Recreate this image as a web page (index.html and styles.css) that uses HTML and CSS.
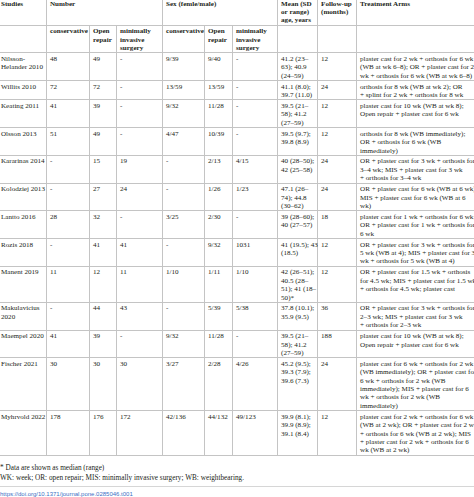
FILE: index.html
```html
<!DOCTYPE html>
<html lang="en">
<head>
<meta charset="utf-8">
<title>Table 1</title>
<link rel="stylesheet" href="styles.css">
</head>
<body>
<div class="page">
<table class="data">
<colgroup>
<col class="c1"><col class="c2"><col class="c3"><col class="c4"><col class="c5"><col class="c6"><col class="c7"><col class="c8"><col class="c9"><col class="c10">
</colgroup>
<thead>
<tr>
<th>Studies</th>
<th colspan="3">Number</th>
<th colspan="3">Sex (femle/male)</th>
<th>Mean (SD<br>or range)<br>age, years</th>
<th>Follow-up<br>(months)</th>
<th>Treatment Arms</th>
</tr>
<tr>
<th></th>
<th>conservative</th>
<th>Open<br>repair</th>
<th>minimally<br>invasive<br>surgery</th>
<th>conservative</th>
<th>Open<br>repair</th>
<th>minimally<br>invasive<br>surgery</th>
<th></th>
<th></th>
<th></th>
</tr>
</thead>
<tbody>
<tr>
<td>Nilsson-<br>Helander 2010</td><td>48</td><td>49</td><td>-</td><td>9/39</td><td>9/40</td><td>-</td>
<td>41.2 (23–<br>63); 40.9<br>(24–59)</td><td>12</td>
<td>plaster cast for 2 wk + orthosis for 6 wk<br>(WB at wk 6–8); OR + plaster cast for 2<br>wk + orthosis for 6 wk (WB at wk 6–8)</td>
</tr>
<tr>
<td>Willits 2010</td><td>72</td><td>72</td><td>-</td><td>13/59</td><td>13/59</td><td>-</td>
<td>41.1 (8.0);<br>39.7 (11.0)</td><td>24</td>
<td>orthosis for 8 wk (WB at wk 2); OR<br>+ splint for 2 wk + orthosis for 8 wk</td>
</tr>
<tr>
<td>Keating 2011</td><td>41</td><td>39</td><td>-</td><td>9/32</td><td>11/28</td><td>-</td>
<td>39.5 (21–<br>58); 41.2<br>(27–59)</td><td>12</td>
<td>plaster cast for 10 wk (WB at wk 8);<br>Open repair + plaster cast for 6 wk</td>
</tr>
<tr>
<td>Olsson 2013</td><td>51</td><td>49</td><td>-</td><td>4/47</td><td>10/39</td><td>-</td>
<td>39.5 (9.7);<br>39.8 (8.9)</td><td>12</td>
<td>orthosis for 8 wk (WB immediately);<br>OR + orthosis for 6 wk (WB<br>immediately)</td>
</tr>
<tr>
<td>Kararinas 2014</td><td>-</td><td>15</td><td>19</td><td>-</td><td>2/13</td><td>4/15</td>
<td>40 (28–50);<br>42 (25–58)</td><td>24</td>
<td>OR + plaster cast for 3 wk + orthosis for<br>3–4 wk; MIS + plaster cast for 3 wk<br>+ orthosis for 3–4 wk</td>
</tr>
<tr>
<td>Kolodziej 2013</td><td>-</td><td>27</td><td>24</td><td>-</td><td>1/26</td><td>1/23</td>
<td>47.1 (26–<br>74); 44.8<br>(30–62)</td><td>24</td>
<td>OR + plaster cast for 6 wk (WB at 6 wk);<br>MIS + plaster cast for 6 wk (WB at 6<br>wk)</td>
</tr>
<tr>
<td>Lantto 2016</td><td>28</td><td>32</td><td>-</td><td>3/25</td><td>2/30</td><td>-</td>
<td>39 (28–60);<br>40 (27–57)</td><td>18</td>
<td>plaster cast for 1 wk + orthosis for 6 wk;<br>OR + plaster cast for 1 wk + orthosis for<br>6 wk</td>
</tr>
<tr>
<td>Rozis 2018</td><td>-</td><td>41</td><td>41</td><td>-</td><td>9/32</td><td>1031</td>
<td>41 (19.5); 43<br>(18.5)</td><td>12</td>
<td>OR + plaster cast for 3 wk + orthosis for<br>5 wk (WB at 4); MIS + plaster cast for 3<br>wk + orthosis for 5 wk (WB at 4)</td>
</tr>
<tr>
<td>Manent 2019</td><td>11</td><td>12</td><td>11</td><td>1/10</td><td>1/11</td><td>1/10</td>
<td>42 (26–51);<br>40.5 (28–<br>51); 41 (18–<br>50)*</td><td>12</td>
<td>OR + plaster cast for 1.5 wk + orthosis<br>for 4.5 wk; MIS + plaster cast for 1.5 wk<br>+ orthosis for 4.5 wk; plaster cast</td>
</tr>
<tr>
<td>Makulavicius<br>2020</td><td>-</td><td>44</td><td>43</td><td>-</td><td>5/39</td><td>5/38</td>
<td>37.8 (10.1);<br>35.9 (9.5)</td><td>36</td>
<td>OR + plaster cast for 3 wk + orthosis for<br>2–3 wk; MIS + plaster cast for 3 wk<br>+ orthosis for 2–3 wk</td>
</tr>
<tr>
<td>Maempel 2020</td><td>41</td><td>39</td><td>-</td><td>9/32</td><td>11/28</td><td>-</td>
<td>39.5 (21–<br>58); 41.2<br>(27–59)</td><td>188</td>
<td>plaster cast for 10 wk (WB at wk 8);<br>Open repair + plaster cast for 6 wk</td>
</tr>
<tr>
<td>Fischer 2021</td><td>30</td><td>30</td><td>30</td><td>3/27</td><td>2/28</td><td>4/26</td>
<td>45.2 (9.5);<br>39.3 (7.9);<br>39.6 (7.3)</td><td>24</td>
<td>plaster cast for 6 wk + orthosis for 2 wk<br>(WB immediately); OR + plaster cast for<br>6 wk + orthosis for 2 wk (WB<br>immediately); MIS + plaster cast for 6<br>wk + orthosis for 2 wk (WB<br>immediately)</td>
</tr>
<tr>
<td>Myhrvold 2022</td><td>178</td><td>176</td><td>172</td><td>42/136</td><td>44/132</td><td>49/123</td>
<td>39.9 (8.1);<br>39.9 (8.9);<br>39.1 (8.4)</td><td>12</td>
<td>plaster cast for 2 wk + orthosis for 6 wk<br>(WB at 2 wk); OR + plaster cast for 2 wk<br>+ orthosis for 6 wk (WB at 2 wk); MIS<br>+ plaster cast for 2 wk + orthosis for 6<br>wk (WB at 2 wk)</td>
</tr>
</tbody>
</table>
<div class="notes">
<p class="note">* Data are shown as median (range)</p>
<p class="note">WK: week; OR: open repair; MIS: minimally invasive surgery; WB: weightbearing.</p>
</div>
<div class="linkbar">
<a class="doi" href="#">https://doi.org/10.1371/journal.pone.0285046.t001</a>
</div>
</div>
</body>
</html>
```
FILE: styles.css
```css
html, body {
  margin: 0;
  padding: 0;
  background: #ffffff;
}
body {
  width: 474px;
  height: 497px;
  overflow: hidden;
  font-family: "Liberation Serif", "Times New Roman", serif;
  color: #231f20;
}
.page {
  display: flex;
  flex-direction: column;
}
.data {
  border-collapse: collapse;
  table-layout: fixed;
  width: 481px;
  margin: -3px 0 0 -3px;
  font-size: 7.1px;
  line-height: 8.4px;
}
.c1 { width: 49px; }
.c2 { width: 43px; }
.c3 { width: 27px; }
.c4 { width: 46px; }
.c5 { width: 42px; }
.c6 { width: 28px; }
.c7 { width: 45px; }
.c8 { width: 40px; }
.c9 { width: 39px; }
.c10 { width: 122px; }
.data th,
.data td {
  border: 1px solid #c4c4c4;
  padding: 1.5px 2px 0 3px;
  text-align: left;
  vertical-align: top;
  white-space: nowrap;
  overflow: visible;
}
.data th {
  font-weight: bold;
}
.data td {
  font-weight: normal;
}
.notes {
  margin-top: 7px;
  display: flex;
  flex-direction: column;
}
.note {
  margin: 0;
  font-size: 7.25px;
  line-height: 10px;
}
.linkbar {
  margin-top: 3px;
  border-top: 1px solid #d6d6d6;
  padding-top: 4px;
  font-size: 6px;
  line-height: 7px;
}
.doi {
  font-family: "Liberation Sans", Arial, sans-serif;
  font-size: 6px;
  line-height: 7px;
  color: #3a6fc4;
  text-decoration: none;
}
```
